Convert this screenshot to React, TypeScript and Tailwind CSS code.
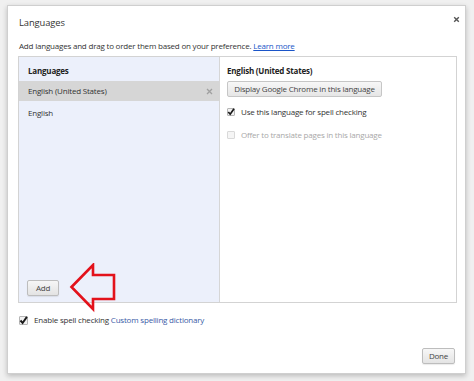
import React from "react";

function Check({ checked, disabled, size = 8 }: { checked?: boolean; disabled?: boolean; size?: number }) {
  return (
    <span
      className={`inline-flex shrink-0 items-center justify-center rounded-[1px] border ${
        disabled ? "border-[#d9d9d9] bg-[#f5f5f5]" : "border-[#b5b5b5] bg-[#f2f2f2]"
      }`}
      style={{ width: size, height: size }}
    >
      {checked && (
        <svg width={size} height={size} viewBox="0 0 8 8" className="overflow-visible">
          <path d="M1.3 4 L3.2 6.2 L7 0.8" stroke="#1a1a1a" strokeWidth="1.7" fill="none" />
        </svg>
      )}
    </span>
  );
}

export default function App() {
  return (
    <div
      className="relative h-[381px] w-[474px] bg-[#f0f0f0] text-[8px] tracking-[-0.2px] text-[#333]"
      style={{ fontFamily: '"Open Sans", "Noto Sans", sans-serif' }}
    >
      <div className="absolute left-[7px] top-[5px] flex h-[369px] w-[459px] flex-col border border-[#cfcfcf] bg-white shadow-[0_2px_5px_rgba(0,0,0,0.22)]">
        <div className="flex items-start justify-between pl-[11px] pr-[5px] pt-[11px]">
          <div className="text-[9.4px] leading-[12px] tracking-[-0.1px] text-[#333]">Languages</div>
          <svg width="7" height="7" viewBox="0 0 7 7" className="mt-[-1px]">
            <path d="M1.2 1.2 L5.8 5.8 M5.8 1.2 L1.2 5.8" stroke="#555" strokeWidth="1.4" />
          </svg>
        </div>
        <div className="mt-[11px] pl-[11px] leading-[11px] text-[#333]">
          Add languages and drag to order them based on your preference.{" "}
          <span className="text-[#1a55c8] underline">Learn more</span>
        </div>
        <div className="mx-[10px] mt-[5px] flex h-[247px] w-[439px] border border-[#d3d3d3]">
          <div className="flex w-[201px] flex-col border-r border-[#d6d6d6] bg-[#ecf0fb]">
            <div className="h-[24px] pl-[9px] pt-[8px] font-bold leading-[11px] text-[#222]">Languages</div>
            <div className="flex h-[20px] items-center justify-between bg-[#d6d6d6] pl-[9px] pr-[6px]">
              <span>English (United States)</span>
              <svg width="7" height="7" viewBox="0 0 7 7">
                <path d="M1 1 L6 6 M6 1 L1 6" stroke="#a0a0a0" strokeWidth="1.3" />
              </svg>
            </div>
            <div className="flex h-[23px] items-center pl-[9px]">English</div>
            <div className="flex-1" />
            <div className="relative mb-[6px] ml-[8px] flex items-end">
              <div className="flex h-[16px] w-[32px] items-center justify-center rounded-[2px] border border-[#bdbdbd] bg-gradient-to-b from-[#f6f6f6] to-[#e3e3e3] text-[#444] shadow-[0_1px_1px_rgba(0,0,0,0.08)]">
                Add
              </div>
              <svg
                width="50"
                height="50"
                viewBox="0 0 50 50"
                className="absolute left-[42px] top-[-17px]"
              >
                <path
                  d="M2.5 24 L24 2 L24 12 L45 12 L45 36 L24 36 L24 46 Z"
                  fill="none"
                  stroke="#e3121b"
                  strokeWidth="2.6"
                  strokeLinejoin="miter"
                />
              </svg>
            </div>
          </div>
          <div className="flex flex-1 flex-col pl-[7px]">
            <div className="pt-[8px] font-bold leading-[11px] text-[#222]">English (United States)</div>
            <div className="mt-[5px] flex h-[16px] w-[155px] items-center justify-center rounded-[2px] border border-[#c6c6c6] bg-gradient-to-b from-[#f7f7f7] to-[#e6e6e6] text-[#444]">
              Display Google Chrome in this language
            </div>
            <div className="mt-[10px] flex h-[10px] items-center gap-[6px]">
              <Check checked />
              <span>Use this language for spell checking</span>
            </div>
            <div className="mt-[13px] flex h-[10px] items-center gap-[6px] text-[#a8a8a8]">
              <Check disabled />
              <span>Offer to translate pages in this language</span>
            </div>
          </div>
        </div>
        <div className="ml-[11px] mt-[12px] flex h-[10px] items-center gap-[6px]">
          <Check checked size={9} />
          <span>
            Enable spell checking <span className="text-[#3a5aa6]">Custom spelling dictionary</span>
          </span>
        </div>
        <div className="flex-1" />
        <div className="mb-[9px] mr-[10px] flex justify-end">
          <div className="flex h-[16px] w-[33px] items-center justify-center rounded-[2px] border border-[#bdbdbd] bg-gradient-to-b from-[#f7f7f7] to-[#e4e4e4] text-[#444] shadow-[0_1px_1px_rgba(0,0,0,0.08)]">
            Done
          </div>
        </div>
      </div>
    </div>
  );
}
